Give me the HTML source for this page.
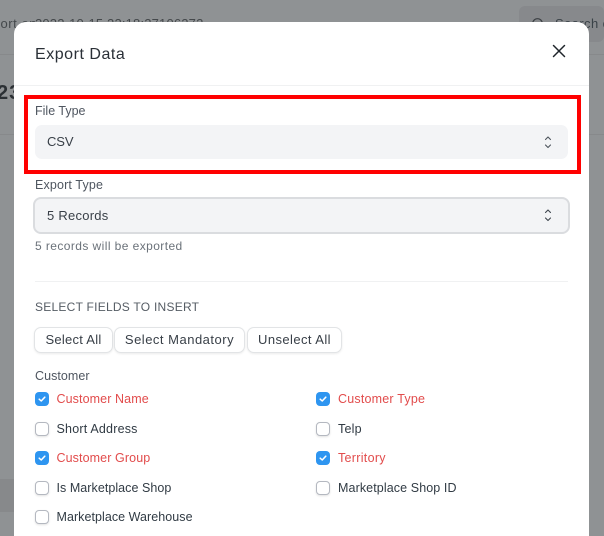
<!DOCTYPE html>
<html style="height:536px;overflow:hidden"><head><meta charset="utf-8"><style>
html,body{margin:0;padding:0}
body{width:604px;height:536px;overflow:hidden;background:#8f9294;font-family:"Liberation Sans",sans-serif;color:#313b44}
#w{position:relative;width:604px;height:536px;overflow:hidden;background:#8f9294}
.a{position:absolute;white-space:nowrap;line-height:16px}
.t{font-size:12.5px;letter-spacing:.1px}
.b{position:absolute;height:24px;top:327px;background:#fff;border:1px solid #e2e4e6;border-radius:7px;box-shadow:0 1px 2px rgba(0,0,0,.08);font-size:13px;line-height:24px;text-align:center;color:#383f47}
.c{position:absolute;width:14px;height:14px;border-radius:4px;box-sizing:border-box}
.on{background:#2e95f0}
.off{background:#fff;border:1px solid #b4b8c0;box-shadow:0 1px 2px rgba(0,0,0,.12)}
.c svg{position:absolute;left:2px;top:2px}
.r{color:#e24c4c}
.sel{position:absolute;left:35px;width:533px;background:#f3f4f6;border-radius:7px}
</style></head><body><div id="w">
<div style="position:absolute;left:0;top:54px;width:604px;height:1px;background:#87898b"></div>
<div style="position:absolute;left:0;top:134px;width:604px;height:1px;background:#87898b"></div>
<div style="position:absolute;left:0;top:479px;width:14px;height:33px;background:#87898b"></div>
<div style="position:absolute;left:519px;top:6px;width:85px;height:36px;background:#87898c;border-radius:6px"></div>
<div class="a" style="left:-25px;top:16px;font-size:13px;letter-spacing:.55px;color:#44484b">Report on</div>
<div class="a" style="left:35px;top:16px;font-size:13px;letter-spacing:.175px;color:#44484b">2022-10-15 22:18:27106272</div>
<svg style="position:absolute;left:531px;top:17px" width="14" height="14" viewBox="0 0 14 14" fill="none" stroke="#3a3e42" stroke-width="1.2"><circle cx="6.5" cy="6.5" r="4.8"/></svg>
<div class="a" style="left:555px;top:16px;font-size:13px;letter-spacing:.4px;color:#3a4248">Search or</div>
<div class="a" style="left:-3px;top:81px;font-size:20px;line-height:24px;letter-spacing:1px;font-weight:bold;color:#2b3034">23</div>

<div style="position:absolute;left:14px;top:22px;width:575px;height:530px;background:#fff;border-radius:12px"></div>
<div class="a" style="left:35px;top:45px;font-size:16px;line-height:20px;letter-spacing:.53px;color:#2a3037">Export Data</div>
<svg style="position:absolute;left:552px;top:44px" width="14" height="14" viewBox="0 0 14 14" fill="none" stroke="#1f252b" stroke-width="1.5" stroke-linecap="round"><path d="M1.5 1.5 12.5 12.5M12.5 1.5 1.5 12.5"/></svg>
<div style="position:absolute;left:14px;top:85px;width:575px;height:1px;background:#f0f1f2"></div>

<div style="position:absolute;left:24px;top:95px;width:557px;height:79px;box-sizing:border-box;border:4px solid #f00"></div>
<div class="a t" style="left:35px;top:103px;color:#4f5660;letter-spacing:0">File Type</div>
<div class="sel" style="top:125px;height:34px"></div>
<div class="a t" style="left:47px;top:134px;font-size:13px;color:#383f47;letter-spacing:-.1px">CSV</div>
<svg style="position:absolute;left:543px;top:135px" width="10" height="15" viewBox="0 0 10 15" fill="none" stroke="#4d545c" stroke-width="1.1" stroke-linecap="round" stroke-linejoin="round"><path d="M2.5 4.5 5 2 7.5 4.5M2.5 10 5 12.5 7.5 10"/></svg>

<div class="a t" style="left:35px;top:177px;color:#4f5660;letter-spacing:.15px">Export Type</div>
<div class="sel" style="top:197px;left:33px;width:537px;height:37px;box-sizing:border-box;border:2px solid #dadcdf;border-radius:8px"></div>
<div class="a t" style="left:47px;top:208px;font-size:13px;color:#383f47;letter-spacing:.25px">5 Records</div>
<svg style="position:absolute;left:543px;top:208px" width="10" height="15" viewBox="0 0 10 15" fill="none" stroke="#3f464e" stroke-width="1.1" stroke-linecap="round" stroke-linejoin="round"><path d="M2.5 4.5 5 2 7.5 4.5M2.5 10 5 12.5 7.5 10"/></svg>
<div class="a" style="left:35px;top:238px;font-size:12px;letter-spacing:.42px;color:#6b727a">5 records will be exported</div>
<div style="position:absolute;left:35px;top:281px;width:533px;height:1px;background:#f0f1f2"></div>
<div class="a" style="left:35px;top:299px;font-size:12px;letter-spacing:.25px;color:#555c64">SELECT FIELDS TO INSERT</div>

<div class="b" style="left:34px;width:77px;letter-spacing:.25px">Select All</div>
<div class="b" style="left:114px;width:129px;letter-spacing:.5px">Select Mandatory</div>
<div class="b" style="left:247px;width:93px;letter-spacing:.42px">Unselect All</div>

<div class="a t" style="left:35px;top:368px;color:#4f5660;letter-spacing:.05px">Customer</div>

<div class="c on" style="left:35px;top:392px"><svg width="10" height="10" viewBox="0 0 10 10" fill="none" stroke="#fff" stroke-width="1.5" stroke-linecap="round" stroke-linejoin="round"><path d="M2.2 5.2 4.2 7 7.8 3.2"/></svg></div>
<div class="a t r" style="left:56.5px;top:391px">Customer Name</div>
<div class="c off" style="left:35px;top:422px"></div>
<div class="a t" style="left:56.5px;top:421px;letter-spacing:.2px">Short Address</div>
<div class="c on" style="left:35px;top:451px"><svg width="10" height="10" viewBox="0 0 10 10" fill="none" stroke="#fff" stroke-width="1.5" stroke-linecap="round" stroke-linejoin="round"><path d="M2.2 5.2 4.2 7 7.8 3.2"/></svg></div>
<div class="a t r" style="left:56.5px;top:450px">Customer Group</div>
<div class="c off" style="left:35px;top:481px"></div>
<div class="a t" style="left:56.5px;top:480px;letter-spacing:.05px">Is Marketplace Shop</div>
<div class="c off" style="left:35px;top:510px"></div>
<div class="a t" style="left:56.5px;top:509px;letter-spacing:.05px">Marketplace Warehouse</div>

<div class="c on" style="left:316px;top:392px"><svg width="10" height="10" viewBox="0 0 10 10" fill="none" stroke="#fff" stroke-width="1.5" stroke-linecap="round" stroke-linejoin="round"><path d="M2.2 5.2 4.2 7 7.8 3.2"/></svg></div>
<div class="a t r" style="left:338px;top:391px;letter-spacing:.2px">Customer Type</div>
<div class="c off" style="left:316px;top:422px"></div>
<div class="a t" style="left:338px;top:421px;letter-spacing:.2px">Telp</div>
<div class="c on" style="left:316px;top:451px"><svg width="10" height="10" viewBox="0 0 10 10" fill="none" stroke="#fff" stroke-width="1.5" stroke-linecap="round" stroke-linejoin="round"><path d="M2.2 5.2 4.2 7 7.8 3.2"/></svg></div>
<div class="a t r" style="left:338px;top:450px;letter-spacing:.3px">Territory</div>
<div class="c off" style="left:316px;top:481px"></div>
<div class="a t" style="left:338px;top:480px;letter-spacing:.1px">Marketplace Shop ID</div>
</div></body></html>
